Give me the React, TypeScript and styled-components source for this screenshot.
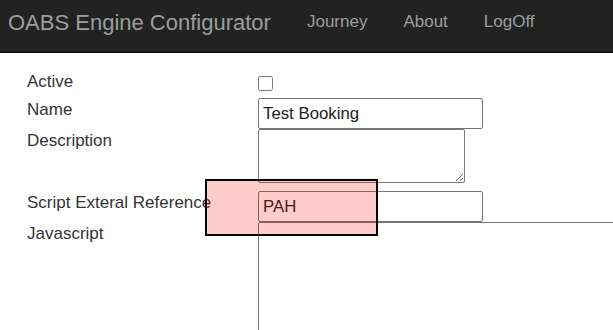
import React, { FC } from "react";
import styled, { createGlobalStyle } from "styled-components";

const GlobalStyle = createGlobalStyle`
  html, body {
    margin: 0;
    padding: 0;
    overflow: hidden;
    background: #fff;
  }
  body {
    font-family: "Liberation Sans", Arial, sans-serif;
    font-size: 17px;
    line-height: 24px;
    color: #333;
  }
`;

const Root = styled.div`
  position: relative;
  width: 613px;
  height: 330px;
  overflow: hidden;
`;

const Navbar = styled.nav`
  display: flex;
  align-items: center;
  height: 52px;
  padding: 0 0 0 8px;
  background: #222;
  border-bottom: 1px solid #080808;
  box-sizing: content-box;
`;

const Brand = styled.a`
  font-size: 22px;
  line-height: 24px;
  color: #9d9d9d;
  padding-right: 18px;
  margin-top: -7px;
  text-decoration: none;
`;

const NavLink = styled.a`
  font-size: 17px;
  line-height: 24px;
  color: #9d9d9d;
  padding: 0 18px;
  margin-top: -8px;
  text-decoration: none;
`;

const Form = styled.form`
  padding: 17px 0 0 27px;
`;

const Row = styled.div<{ $gap?: number }>`
  display: grid;
  grid-template-columns: 231px 1fr;
  align-items: start;
  margin-bottom: ${(p) => p.$gap ?? 0}px;
`;

const Label = styled.label`
  line-height: 24px;
  color: #333;
`;

const Check = styled.input`
  width: 15px;
  height: 15px;
  margin: 6px 0 7px 0;
`;

const TextInput = styled.input`
  box-sizing: border-box;
  width: 225px;
  height: 31px;
  margin: 0;
  padding: 0 4px;
  border: 1px solid #767676;
  border-radius: 2px;
  font-family: "Liberation Sans", Arial, sans-serif;
  font-size: 16.8px;
  color: #222;
`;

const Area = styled.textarea<{ $w: number; $h: number }>`
  box-sizing: border-box;
  display: block;
  width: ${(p) => p.$w}px;
  height: ${(p) => p.$h}px;
  margin: 0;
  padding: 2px 4px;
  border: 1px solid #767676;
  border-radius: 2px;
  font-family: "Liberation Sans", Arial, sans-serif;
  font-size: 16.8px;
  color: #222;
`;

const Highlight = styled.div`
  position: absolute;
  left: 205px;
  top: 179px;
  width: 173px;
  height: 57px;
  box-sizing: border-box;
  border: 2px solid #000;
  background: rgba(255, 0, 0, 0.2);
  pointer-events: none;
`;

const App: FC = () => {
  return (
    <Root>
      <GlobalStyle />
      <Navbar>
        <Brand href="#">OABS Engine Configurator</Brand>
        <NavLink href="#">Journey</NavLink>
        <NavLink href="#">About</NavLink>
        <NavLink href="#">LogOff</NavLink>
      </Navbar>
      <Form>
        <Row>
          <Label>Active</Label>
          <div>
            <Check type="checkbox" />
          </div>
        </Row>
        <Row>
          <Label>Name</Label>
          <TextInput defaultValue="Test Booking" />
        </Row>
        <Row $gap={8}>
          <Label>Description</Label>
          <Area $w={207} $h={54} />
        </Row>
        <Row>
          <Label>Script Exteral Reference</Label>
          <TextInput defaultValue="PAH" />
        </Row>
        <Row>
          <Label>Javascript</Label>
          <Area $w={600} $h={300} />
        </Row>
      </Form>
      <Highlight />
    </Root>
  );
};

export default App;
